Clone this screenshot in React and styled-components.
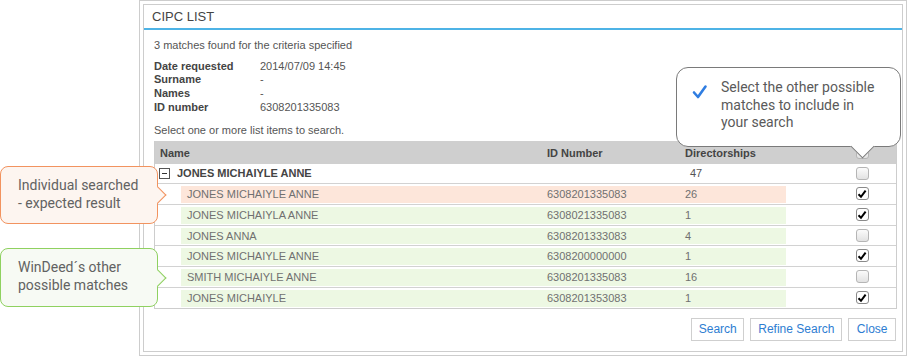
import React from 'react';
import styled, { createGlobalStyle } from 'styled-components';

const GlobalStyle = createGlobalStyle`
  html, body {
    margin: 0;
    padding: 0;
    background: #fff;
  }
  body {
    font-family: 'Liberation Sans', Arial, sans-serif;
  }
`;

const Stage = styled.div`
  position: relative;
  width: 908px;
  height: 358px;
  overflow: hidden;
`;

const OuterFrame = styled.div`
  box-sizing: border-box;
  margin-left: 139px;
  width: 768px;
  height: 356px;
  border: 1px solid #cdcdcd;
  padding: 3px;
`;

const Panel = styled.div`
  box-sizing: border-box;
  height: 100%;
  border: 1px solid #cdcdcd;
  background: #fff;
  display: flex;
  flex-direction: column;
`;

const PanelTitle = styled.div`
  height: 23px;
  display: flex;
  align-items: center;
  padding-left: 8px;
  font-size: 13px;
  color: #444;
  border-bottom: 2px solid #4db3e6;
`;

const PanelBody = styled.div`
  padding: 8px 5px 0 10px;
  font-size: 11px;
  color: #555;
`;

const Line = styled.div`
  line-height: 14px;
  margin-top: ${({ $mt }) => $mt || 0}px;
`;

const InfoGrid = styled.div`
  display: grid;
  grid-template-columns: 106px 1fr;
  line-height: 13.7px;
  margin-top: 7.5px;
`;

const InfoLabel = styled.span`
  font-weight: bold;
  color: #444;
`;

const Table = styled.div`
  margin-top: 4px;
  border: 1px solid #cdcdcd;
  border-top: none;
`;

const cols = '26px 366px 138px 101px 64px 24px 21px';

const HeadRow = styled.div`
  display: grid;
  grid-template-columns: ${cols};
  height: 23px;
  padding-top: 1px;
  box-sizing: border-box;
  background: #cfcfcf;
  align-items: center;
  font-weight: bold;
  color: #555;
`;

const Row = styled.div`
  display: grid;
  grid-template-columns: ${cols};
  height: ${({ $h }) => $h}px;
  box-sizing: border-box;
  border-bottom: 1px solid #d2d2d2;
  &:last-child {
    border-bottom: none;
  }
`;

const Cell = styled.div`
  display: flex;
  align-items: center;
  padding-left: ${({ $pl }) => $pl || 0}px;
  grid-column: ${({ $span }) => $span || 'auto'};
  background: ${({ $tone }) => $tone || 'transparent'};
  margin: ${({ $tone }) => ($tone ? '2px 0 1px' : '0')};
  color: ${({ $strong }) => ($strong ? '#444' : '#707070')};
  font-weight: ${({ $strong }) => ($strong ? 'bold' : 'normal')};
`;

const BoxCell = styled.div`
  grid-column: 6;
  display: flex;
  align-items: center;
  justify-content: center;
`;

const Collapse = styled.span`
  box-sizing: border-box;
  width: 11px;
  height: 11px;
  border: 1px solid #555;
  margin-right: 7px;
  position: relative;
  &::after {
    content: '';
    position: absolute;
    left: 2px;
    right: 2px;
    top: 4px;
    height: 1px;
    background: #333;
  }
`;

const Check = styled.span`
  box-sizing: border-box;
  width: 13px;
  height: 13px;
  border-radius: 3px;
  border: 1px solid ${({ $on }) => ($on ? '#8a8a8a' : '#b5b5b5')};
  background: ${({ $on }) => ($on ? '#fff' : 'linear-gradient(#fbfbfb, #e2e2e2)')};
  display: flex;
  align-items: center;
  justify-content: center;
`;

const Actions = styled.div`
  display: flex;
  justify-content: flex-end;
  gap: 6px;
  margin-top: 9px;
  padding-right: 1px;
`;

const Button = styled.button`
  height: 23px;
  padding: 0 ${({ $px }) => $px}px;
  border: 1px solid #cfcfcf;
  background: #fff;
  color: #2d7dd2;
  font-family: 'Liberation Sans', Arial, sans-serif;
  font-size: 12px;
  cursor: pointer;
`;

const Callout = styled.div`
  position: absolute;
  left: 0;
  top: ${({ $top }) => $top}px;
  box-sizing: border-box;
  width: 158px;
  height: ${({ $h }) => $h}px;
  padding: 9px 0 0 17px;
  border: 1px solid ${({ $edge }) => $edge};
  border-radius: 8px;
  background: ${({ $fill }) => $fill};
  font-family: Roboto, 'Liberation Sans', sans-serif;
  font-size: 14px;
  line-height: 18px;
  color: #626262;
  &::after {
    content: '';
    position: absolute;
    right: -7px;
    top: ${({ $tip }) => $tip - 6}px;
    width: 11px;
    height: 11px;
    border-top: 1px solid ${({ $edge }) => $edge};
    border-right: 1px solid ${({ $edge }) => $edge};
    background: ${({ $fill }) => $fill};
    transform: rotate(45deg);
  }
`;

const Tip = styled.div`
  position: absolute;
  left: 676px;
  top: 67px;
  box-sizing: border-box;
  width: 225px;
  height: 80px;
  padding: 11px 0 0 44px;
  border: 1px solid #7a7a7a;
  border-radius: 12px;
  background: #fff;
  font-family: Roboto, 'Liberation Sans', sans-serif;
  font-size: 14px;
  line-height: 17.5px;
  color: #5a5a5a;
  &::after {
    content: '';
    position: absolute;
    left: 177px;
    bottom: -9px;
    width: 16px;
    height: 16px;
    border-right: 1px solid #7a7a7a;
    border-bottom: 1px solid #7a7a7a;
    background: #fff;
    transform: rotate(45deg);
  }
`;

const TipMark = styled.svg`
  position: absolute;
  left: 15px;
  top: 16px;
`;

const ORANGE = '#fde6da';
const GREEN = '#edf8e3';

const rows = [
  { name: 'JONES MICHAIYLE ANNE', id: '6308201335083', dir: '26', tone: ORANGE, on: true, h: 21 },
  { name: 'JONES MICHAIYLA ANNE', id: '6308021335083', dir: '1', tone: GREEN, on: true, h: 21 },
  { name: 'JONES ANNA', id: '6308201333083', dir: '4', tone: GREEN, on: false, h: 20 },
  { name: 'JONES MICHAIYLE ANNE', id: '6308200000000', dir: '1', tone: GREEN, on: true, h: 21 },
  { name: 'SMITH MICHAIYLE ANNE', id: '6308201335083', dir: '16', tone: GREEN, on: false, h: 21 },
  { name: 'JONES MICHAIYLE', id: '6308201353083', dir: '1', tone: GREEN, on: true, h: 20 },
];

const Box = ({ on }) => (
  <Check $on={on}>
    {on && (
      <svg width="10" height="10" viewBox="0 0 10 10">
        <path d="M1.5 5.2 L4 7.8 L8.6 1.6" fill="none" stroke="#000" strokeWidth="2" />
      </svg>
    )}
  </Check>
);

export default function App() {
  return (
    <Stage>
      <GlobalStyle />
      <OuterFrame>
        <Panel>
          <PanelTitle>CIPC LIST</PanelTitle>
          <PanelBody>
            <Line>3 matches found for the criteria specified</Line>
            <InfoGrid>
              <InfoLabel>Date requested</InfoLabel>
              <span>2014/07/09 14:45</span>
              <InfoLabel>Surname</InfoLabel>
              <span>-</span>
              <InfoLabel>Names</InfoLabel>
              <span>-</span>
              <InfoLabel>ID number</InfoLabel>
              <span>6308201335083</span>
            </InfoGrid>
            <Line $mt={8.5}>Select one or more list items to search.</Line>
            <Table>
              <HeadRow>
                <Cell $span="1 / 3" $pl={5} $strong>Name</Cell>
                <Cell $strong>ID Number</Cell>
                <Cell $strong>Directorships</Cell>
                <BoxCell><Box on={false} /></BoxCell>
              </HeadRow>
              <Row $h={20}>
                <Cell $span="1 / 3" $pl={4} $strong>
                  <Collapse />
                  JONES MICHAIYLE ANNE
                </Cell>
                <Cell />
                <Cell $pl={5} style={{ color: '#555' }}>47</Cell>
                <Cell />
                <BoxCell><Box on={false} /></BoxCell>
              </Row>
              {rows.map((r, i) => (
                <Row key={i} $h={r.h}>
                  <Cell />
                  <Cell $tone={r.tone} $pl={6}>{r.name}</Cell>
                  <Cell $tone={r.tone}>{r.id}</Cell>
                  <Cell $tone={r.tone}>{r.dir}</Cell>
                  <Cell />
                  <BoxCell><Box on={r.on} /></BoxCell>
                </Row>
              ))}
            </Table>
            <Actions>
              <Button $px={6.5}>Search</Button>
              <Button $px={7}>Refine Search</Button>
              <Button $px={7.5}>Close</Button>
            </Actions>
          </PanelBody>
        </Panel>
      </OuterFrame>

      <Callout $top={166} $h={58} $tip={28} $edge="#f2935f" $fill="#fdf5f0">
        Individual searched
        <br />- expected result
      </Callout>
      <Callout $top={248} $h={59} $tip={29} $edge="#8fd160" $fill="#f7faf4">
        WinDeed´s other
        <br />possible matches
      </Callout>

      <Tip>
        <TipMark width="16" height="16" viewBox="0 0 16 16">
          <path d="M2 8.5 L6 13 L13.5 2.5" fill="none" stroke="#2f7de1" strokeWidth="2.6" strokeLinecap="round" strokeLinejoin="round" />
        </TipMark>
        Select the other possible
        <br />matches to include in
        <br />your search
      </Tip>
    </Stage>
  );
}
